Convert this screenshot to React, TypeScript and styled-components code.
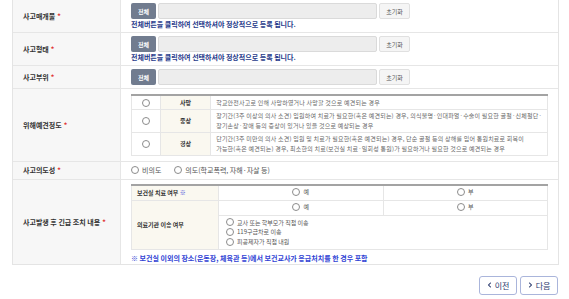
import React from 'react';
import styled, { createGlobalStyle } from 'styled-components';
import { FaChevronLeft, FaChevronRight } from 'react-icons/fa';

const GlobalStyle = createGlobalStyle`
    html, body {
        margin: 0;
        padding: 0;
        background: #fff;
    }
    body {
        font-family: 'Noto Sans CJK KR', 'Noto Sans', sans-serif;
        color: #333;
    }
`;

const Page = styled.div`
    width: 547px;
    margin-left: 12px;
`;

const Form = styled.div`
    border: 1px solid #e4e4e4;
    border-top: none;
`;

const Row = styled.div`
    display: grid;
    grid-template-columns: 108px 1fr;
    border-bottom: 1px solid #e6e6e6;
    &:last-child {
        border-bottom: none;
    }
`;

const Label = styled.div`
    background: #f7f7f7;
    border-right: 1px solid #e6e6e6;
    padding-left: 10px;
    display: flex;
    align-items: center;
    font-size: 7px;
    font-weight: 700;
    color: #333;
`;

const Req = styled.span`
    color: #e03131;
    margin-left: 2px;
`;

const Content = styled.div<{ $pad?: string; $min?: number }>`
    padding: ${(p) => p.$pad ?? '3px 9px 3px 10px'};
    min-height: ${(p) => (p.$min ? `${p.$min}px` : 'auto')};
    display: flex;
    flex-direction: column;
    justify-content: center;
`;

const Field = styled.div`
    display: flex;
    gap: 2px;
    height: 16px;
`;

const AllButton = styled.button`
    width: 25px;
    padding: 0;
    border: none;
    border-radius: 2px;
    background: #717c8f;
    color: #fff;
    font-family: inherit;
    font-size: 6px;
    font-weight: 700;
`;

const ReadInput = styled.div`
    width: 219px;
    box-sizing: border-box;
    background: #ededed;
    border: 1px solid #dadada;
    border-radius: 2px;
`;

const ResetButton = styled.button`
    width: 31px;
    padding: 0;
    border: 1px solid #e0e0e0;
    border-radius: 2px;
    background: #f5f5f5;
    color: #555;
    font-family: inherit;
    font-size: 6px;
`;

const Help = styled.div<{ $bright?: boolean }>`
    margin-top: ${(p) => (p.$bright ? '4px' : '1px')};
    font-size: 7px;
    line-height: 9px;
    font-weight: 700;
    color: ${(p) => (p.$bright ? '#2f3fd4' : '#26398a')};
    white-space: nowrap;
`;

const Radio = styled.span`
    display: inline-block;
    width: 6px;
    height: 6px;
    border: 1px solid #8c8c8c;
    border-radius: 50%;
    background: #fff;
    flex: none;
`;

const Choice = styled.label<{ $small?: boolean }>`
    display: inline-flex;
    align-items: center;
    gap: 3px;
    font-size: ${(p) => (p.$small ? 6 : 7)}px;
    color: #555;
    white-space: nowrap;
`;

const Choices = styled.div`
    display: flex;
    align-items: center;
    gap: 13px;
`;

const Table = styled.table`
    width: 417px;
    border-collapse: collapse;
    border-top: 2px solid #a3a3a3;
    font-size: 6px;
    color: #666;
    td {
        border: 1px solid #e6e6e6;
        line-height: 9.5px;
    }
`;

const RadioCell = styled.td`
    width: 28px;
    text-align: center;
    vertical-align: middle;
    ${Radio} {
        vertical-align: middle;
    }
`;

const GradeCell = styled.td`
    width: 52px;
    background: #faf8f0;
    text-align: center;
    font-weight: 700;
    color: #333;
`;

const DescCell = styled.td`
    padding: 1.5px 5px;
    white-space: nowrap;
    letter-spacing: 0.2px;
`;

const HeadCell = styled.td`
    width: 76px;
    background: #faf8f0;
    padding: 1px 5px;
    font-weight: 700;
    color: #333;
`;

const Mark = styled.span`
    color: #3a4ad8;
`;

const ValueCell = styled.td`
    text-align: center;
    height: 14px;
    padding: 0;
`;

const ListCell = styled.td`
    padding: 2px 7px 2px;
`;

const List = styled.div`
    display: flex;
    flex-direction: column;
    ${Choice} {
        line-height: 9.8px;
    }
`;

const Nav = styled.div`
    display: flex;
    justify-content: flex-end;
    gap: 3px;
    margin-top: 11px;
    padding-right: 1px;
`;

const NavButton = styled.button`
    width: 38px;
    height: 19px;
    padding: 0;
    display: inline-flex;
    align-items: center;
    justify-content: center;
    gap: 3px;
    border: 1px solid #aab5db;
    border-radius: 3px;
    background: #fff;
    color: #2b3a6e;
    font-family: inherit;
    font-size: 8px;
    svg {
        width: 5px;
        height: 6px;
    }
`;

const grades = [
    {
        name: '사망',
        lines: ['학교안전사고로 인해 사망하였거나 사망할 것으로 예견되는 경우'],
    },
    {
        name: '중상',
        lines: [
            '장기간(3주 이상의 의사 소견) 입원하여 치료가 필요한(혹은 예견되는) 경우, 의식불명·인대파열·수술이 필요한 골절·신체절단·',
            '장기손상·장애 등의 증상이 있거나 있을 것으로 예상되는 경우',
        ],
    },
    {
        name: '경상',
        lines: [
            '단기간(3주 미만의 의사 소견) 입원 및 치료가 필요한(혹은 예견되는) 경우, 단순 골절 등의 상해를 입어 통원치료로 회복이',
            '가능한(혹은 예견되는) 경우, 최소한의 치료(보건실 치료·일회성 통원)가 필요하거나 필요한 것으로 예견되는 경우',
        ],
    },
];

const Picker = ({ help }: { help?: boolean }) => (
    <>
        <Field>
            <AllButton>전체</AllButton>
            <ReadInput />
            <ResetButton>초기화</ResetButton>
        </Field>
        {help && <Help>전체버튼을 클릭하여 선택하셔야 정상적으로 등록 됩니다.</Help>}
    </>
);

export default function App() {
    return (
        <Page>
            <GlobalStyle />
            <Form>
                <Row>
                    <Label>
                        사고매개물<Req>*</Req>
                    </Label>
                    <Content>
                        <Picker help />
                    </Content>
                </Row>
                <Row>
                    <Label>
                        사고형태<Req>*</Req>
                    </Label>
                    <Content>
                        <Picker help />
                    </Content>
                </Row>
                <Row>
                    <Label>
                        사고부위<Req>*</Req>
                    </Label>
                    <Content>
                        <Picker />
                    </Content>
                </Row>
                <Row>
                    <Label>
                        위해예견정도<Req>*</Req>
                    </Label>
                    <Content $pad="5px 9px 5px 10px">
                        <Table>
                            <tbody>
                                {grades.map((g) => (
                                    <tr key={g.name}>
                                        <RadioCell>
                                            <Radio />
                                        </RadioCell>
                                        <GradeCell>{g.name}</GradeCell>
                                        <DescCell>
                                            {g.lines.map((l, i) => (
                                                <div key={i}>{l}</div>
                                            ))}
                                        </DescCell>
                                    </tr>
                                ))}
                            </tbody>
                        </Table>
                    </Content>
                </Row>
                <Row>
                    <Label>
                        사고의도성<Req>*</Req>
                    </Label>
                    <Content $pad="0 9px 0 10px" $min={17}>
                        <Choices>
                            <Choice>
                                <Radio />
                                비의도
                            </Choice>
                            <Choice>
                                <Radio />
                                의도(학교폭력, 자해·자살 등)
                            </Choice>
                        </Choices>
                    </Content>
                </Row>
                <Row>
                    <Label>
                        사고발생 후 긴급 조치 내용<Req>*</Req>
                    </Label>
                    <Content $pad="4px 9px 1px 10px">
                        <Table>
                            <tbody>
                                <tr>
                                    <HeadCell>
                                        보건실 치료 여부 <Mark>※</Mark>
                                    </HeadCell>
                                    <ValueCell>
                                        <Choice $small>
                                            <Radio />예
                                        </Choice>
                                    </ValueCell>
                                    <ValueCell>
                                        <Choice $small>
                                            <Radio />부
                                        </Choice>
                                    </ValueCell>
                                </tr>
                                <tr>
                                    <HeadCell rowSpan={2}>의료기관 이송 여부</HeadCell>
                                    <ValueCell>
                                        <Choice $small>
                                            <Radio />예
                                        </Choice>
                                    </ValueCell>
                                    <ValueCell>
                                        <Choice $small>
                                            <Radio />부
                                        </Choice>
                                    </ValueCell>
                                </tr>
                                <tr>
                                    <ListCell colSpan={2}>
                                        <List>
                                            <Choice $small>
                                                <Radio />교사 또는 학부모가 직접 이송
                                            </Choice>
                                            <Choice $small>
                                                <Radio />119구급차로 이송
                                            </Choice>
                                            <Choice $small>
                                                <Radio />피공제자가 직접 내원
                                            </Choice>
                                        </List>
                                    </ListCell>
                                </tr>
                            </tbody>
                        </Table>
                        <Help $bright>
                            ※ 보건실 이외의 장소(운동장, 체육관 등)에서 보건교사가 응급처치를 한 경우 포함
                        </Help>
                    </Content>
                </Row>
            </Form>
            <Nav>
                <NavButton>
                    <FaChevronLeft />
                    이전
                </NavButton>
                <NavButton>
                    <FaChevronRight />
                    다음
                </NavButton>
            </Nav>
        </Page>
    );
}
